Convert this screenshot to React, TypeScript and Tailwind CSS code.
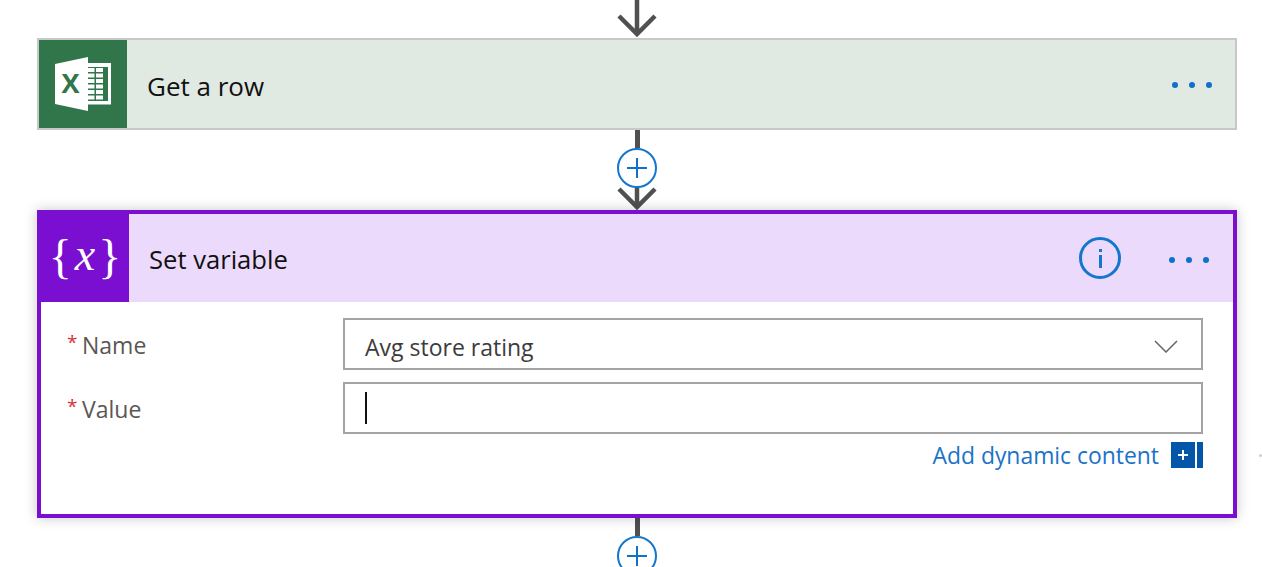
import React from "react";

const FONT = "[font-family:'Open_Sans','Noto_Sans',sans-serif]";
const ROWS = [11, 16.5, 22, 27.5, 33, 38.5];

function ExcelIcon() {
  return (
    <svg width="56" height="54" viewBox="0 0 56 54" className="block">
      <path d="M0 7 L33 0 V54 L0 47 Z" fill="#fff" />
      <path d="M33 6 H56 V47.5 H33 Z" fill="#fff" />
      <path d="M33 10 H53 V44 H33 Z" fill="#31754a" />
      {ROWS.map((y) => (
        <g key={y} fill="#fff">
          <rect x="33" y={y} width="6.5" height="4" />
          <rect x="41" y={y} width="7" height="4" />
        </g>
      ))}
      <text x="15.5" y="36" textAnchor="middle" fontSize="27" fontWeight="700" fill="#31754a" fontFamily="'Open Sans', sans-serif">X</text>
    </svg>
  );
}

function Dots() {
  return (
    <div className="flex gap-[11px]">
      <span className="w-[6px] h-[6px] rounded-full bg-[#0f70cf]" />
      <span className="w-[6px] h-[6px] rounded-full bg-[#0f70cf]" />
      <span className="w-[6px] h-[6px] rounded-full bg-[#0f70cf]" />
    </div>
  );
}

function Arrow({ height }: { height: number }) {
  const tip = height - 4;
  return (
    <svg width="40" height={height} viewBox={`0 0 40 ${height}`} className="block">
      <path
        d={`M20 0 V${tip} M2 ${tip - 18} L20 ${tip} L38 ${tip - 18}`}
        fill="none"
        stroke="#505050"
        strokeWidth="4.5"
      />
    </svg>
  );
}

function AddButton() {
  return (
    <div className="w-[40px] h-[40px] rounded-full border-2 border-[#1476cc] bg-white flex items-center justify-center shrink-0 relative z-10">
      <svg width="20" height="20" viewBox="0 0 20 20" className="block">
        <path d="M10 0 V20 M0 10 H20" stroke="#0f70cf" strokeWidth="2" />
      </svg>
    </div>
  );
}

function Field({ label, children }: { label: string; children: React.ReactNode }) {
  return (
    <div className="flex items-center h-[52px]">
      <div className="w-[302px] pl-[26px] pt-[3px] text-[23px] text-[#5b5754] leading-none flex items-center">
        <span className="text-[#d13438] text-[19px] w-[15px] -mt-[6px]">*</span>
        {label}
      </div>
      <div className="w-[860px] h-[52px] border-2 border-[#a3a3a3] flex items-center">
        {children}
      </div>
    </div>
  );
}

export default function App() {
  return (
    <div className={`relative w-[1262px] h-[567px] overflow-hidden bg-white pl-[37px] ${FONT}`}>
      {/* top arrow */}
      <div className="w-[1200px] h-[38px] flex justify-center">
        <Arrow height={38} />
      </div>

      {/* Get a row */}
      <div className="w-[1200px] h-[92px] border-2 border-[#c8c8c8] bg-[#e0e9e2] flex items-center">
        <div className="w-[88px] h-full bg-[#31754a] flex items-center justify-center">
          <ExcelIcon />
        </div>
        <div className="ml-[20px] mt-[3px] text-[26px] leading-none text-[#111]">Get a row</div>
        <div className="ml-auto mr-[23px] mt-[1px]"><Dots /></div>
      </div>

      {/* connector */}
      <div className="w-[1200px] h-[80px] flex flex-col items-center">
        <div className="w-[5px] h-[18px] bg-[#505050] shrink-0" />
        <AddButton />
        <div className="-mt-[1px]"><Arrow height={24} /></div>
      </div>

      {/* Set variable */}
      <div className="w-[1200px] h-[308px] border-4 border-[#7a0fd2] bg-white shadow-[0_0_12px_rgba(0,0,0,0.22)] relative">
        <div className="h-[88px] bg-[#ebdafb] flex items-center">
          <div className="w-[88px] h-full bg-[#7a0fd2] flex items-center justify-center text-white [font-family:'Liberation_Serif',serif] leading-none">
            <span className="text-[48px] -mt-[3px]">{"{"}</span>
            <span className="text-[46px] italic mx-[3px] -mt-[6px]">x</span>
            <span className="text-[48px] -mt-[3px]">{"}"}</span>
          </div>
          <div className="ml-[20px] mt-[3px] text-[25.6px] leading-none text-[#111]">Set variable</div>
          <div className="ml-auto w-[42px] h-[42px] rounded-full border-[3px] border-[#1476cc] flex flex-col items-center justify-center gap-[3px]">
            <span className="w-[3px] h-[3px] bg-[#1476cc]" />
            <span className="w-[3px] h-[13px] bg-[#1476cc]" />
          </div>
          <div className="ml-[48px] mr-[24px] mt-[3px]"><Dots /></div>
        </div>

        <div className="pt-[16px]">
          <Field label="Name">
            <div className="pl-[20px] mt-[6px] text-[23px] leading-none text-[#3c3c3c]">Avg store rating</div>
            <svg width="24" height="13" viewBox="0 0 24 13" className="block ml-auto mr-[23px] mt-[4px]">
              <path d="M1 1 L12 12 L23 1" fill="none" stroke="#666" strokeWidth="1.5" />
            </svg>
          </Field>
          <div className="mt-[12px]">
            <Field label="Value">
              <div className="ml-[20px] w-[2px] h-[32px] bg-[#111]" />
            </Field>
          </div>
          <div className="mt-[8px] w-[1162px] flex items-center justify-end">
            <span className="text-[#1a73c7] text-[22.9px] leading-none mt-[2px]">Add dynamic content</span>
            <div className="ml-[12px] w-[24px] h-[26px] bg-[#0456a8] flex items-center justify-center">
              <svg width="10" height="10" viewBox="0 0 10 10" className="block">
                <path d="M5 0 V10 M0 5 H10" stroke="#fff" strokeWidth="2" />
              </svg>
            </div>
            <div className="ml-[2px] w-[6px] h-[26px] bg-[#0456a8]" />
          </div>
        </div>
      </div>

      {/* bottom connector */}
      <div className="w-[1200px] flex flex-col items-center">
        <div className="w-[5px] h-[18px] bg-[#505050] shrink-0" />
        <AddButton />
      </div>

      <span className="absolute left-[1259px] top-[454px] w-[3px] h-[3px] rounded-full bg-[#cfcfcf]" />
    </div>
  );
}
